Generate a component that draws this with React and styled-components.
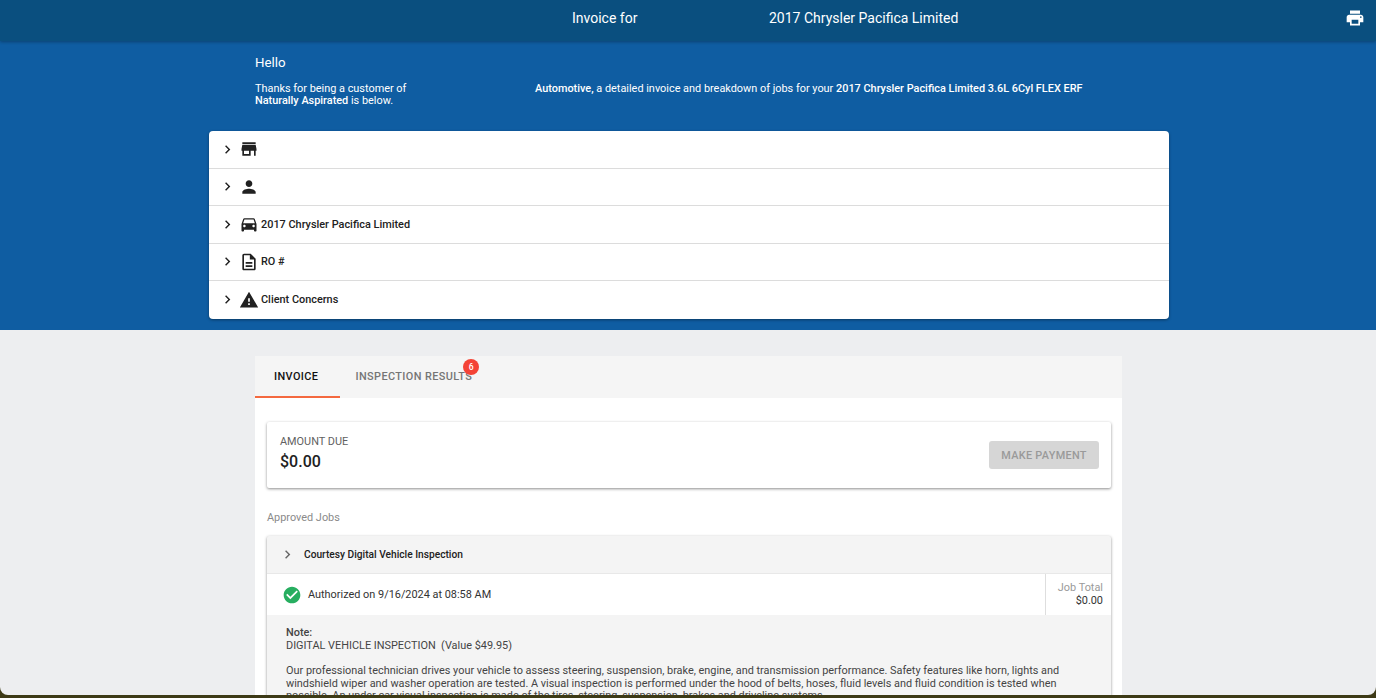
import styled, { createGlobalStyle } from 'styled-components';
import {
  MdStore,
  MdPerson,
  MdDirectionsCar,
  MdOutlineDescription,
  MdWarning,
  MdChevronRight,
  MdPrint,
  MdCheckCircle,
} from 'react-icons/md';

const GlobalStyle = createGlobalStyle`
  html, body {
    margin: 0;
    padding: 0;
    height: 100%;
    overflow: hidden;
    background: #3d3a16;
  }
  * {
    box-sizing: border-box;
  }
  body {
    font-family: Roboto, "Liberation Sans", sans-serif;
  }
`;

const rows = [
  { icon: <MdStore />, label: '' },
  { icon: <MdPerson />, label: '' },
  { icon: <MdDirectionsCar />, label: '2017 Chrysler Pacifica Limited' },
  { icon: <MdOutlineDescription />, label: 'RO #' },
  { icon: <MdWarning />, label: 'Client Concerns' },
];

export default function App() {
  return (
    <Desktop>
      <GlobalStyle />
      <Page>
        <TopBar>
          <TitleLeft>Invoice for</TitleLeft>
          <TitleRight>2017 Chrysler Pacifica Limited</TitleRight>
          <PrintButton>
            <MdPrint />
          </PrintButton>
        </TopBar>

        <Hero>
          <Greeting>
            <Hello>Hello</Hello>
            <Intro>
              <IntroLeft>
                Thanks for being a customer of
                <br />
                <b>Naturally Aspirated</b> is below.
              </IntroLeft>
              <IntroRight>
                <b>Automotive,</b> a detailed invoice and breakdown of jobs for your{' '}
                <b>2017 Chrysler Pacifica Limited 3.6L 6Cyl FLEX ERF</b>
              </IntroRight>
            </Intro>
          </Greeting>
          <Accordion>
            {rows.map((row, i) => (
              <AccordionRow key={i}>
                <RowChevron>
                  <MdChevronRight />
                </RowChevron>
                <RowIcon>{row.icon}</RowIcon>
                {row.label && <RowLabel>{row.label}</RowLabel>}
              </AccordionRow>
            ))}
          </Accordion>
        </Hero>

        <Main>
          <Card>
            <Tabs>
              <Tab $active>INVOICE</Tab>
              <Tab>
                INSPECTION RESULTS
                <Badge>6</Badge>
              </Tab>
            </Tabs>
            <CardBody>
              <AmountCard>
                <AmountText>
                  <AmountLabel>AMOUNT DUE</AmountLabel>
                  <AmountValue>$0.00</AmountValue>
                </AmountText>
                <PayButton>MAKE PAYMENT</PayButton>
              </AmountCard>

              <SectionTitle>Approved Jobs</SectionTitle>

              <JobCard>
                <JobHeader>
                  <JobChevron>
                    <MdChevronRight />
                  </JobChevron>
                  <JobName>Courtesy Digital Vehicle Inspection</JobName>
                </JobHeader>
                <JobStatus>
                  <Authorized>
                    <CheckIcon>
                      <MdCheckCircle />
                    </CheckIcon>
                    Authorized on 9/16/2024 at 08:58 AM
                  </Authorized>
                  <JobTotal>
                    <JobTotalLabel>Job Total</JobTotalLabel>
                    <JobTotalValue>$0.00</JobTotalValue>
                  </JobTotal>
                </JobStatus>
                <JobNote>
                  <NoteTitle>Note:</NoteTitle>
                  <div>DIGITAL VEHICLE INSPECTION&nbsp; (Value $49.95)</div>
                  <NoteText>
                    Our professional technician drives your vehicle to assess steering, suspension, brake, engine, and
                    transmission performance. Safety features like horn, lights and windshield wiper and washer operation
                    are tested. A visual inspection is performed under the hood of belts, hoses, fluid levels and fluid
                    condition is tested when possible. An under car visual inspection is made of the tires, steering,
                    suspension, brakes and driveline systems.
                  </NoteText>
                </JobNote>
              </JobCard>
            </CardBody>
          </Card>
        </Main>
      </Page>
    </Desktop>
  );
}

const Desktop = styled.div`
  height: 698px;
  padding-bottom: 3px;
  overflow: hidden;
  background: #3d3a16;
`;

const Page = styled.div`
  height: 695px;
  overflow: hidden;
  display: flex;
  flex-direction: column;
  background: #edeef0;
  border-radius: 0 0 8px 8px;
`;

const TopBar = styled.header`
  position: relative;
  z-index: 1;
  flex: none;
  height: 41px;
  display: flex;
  align-items: center;
  padding: 0 11px 6px 572px;
  background: #0a4f7f;
  color: #fff;
  font-size: 14px;
  box-shadow: 0 1px 3px rgba(0, 0, 0, 0.3);
`;

const TitleLeft = styled.div`
  width: 197px;
`;

const TitleRight = styled.div``;

const PrintButton = styled.div`
  margin-left: auto;
  display: flex;
  font-size: 20px;
`;

const Hero = styled.section`
  flex: none;
  height: 289px;
  background: #0f5da2;
  color: #fff;
  padding-top: 14px;
`;

const Greeting = styled.div`
  padding-left: 255px;
`;

const Hello = styled.div`
  font-size: 13.3px;
  line-height: 16px;
`;

const Intro = styled.div`
  display: flex;
  margin-top: 11.5px;
  font-size: 10.9px;
  line-height: 12.5px;

  b {
    font-weight: 500;
  }
`;

const IntroLeft = styled.div`
  width: 280px;
`;

const IntroRight = styled.div``;

const Accordion = styled.div`
  width: 960px;
  margin: 23.5px 0 0 209px;
  background: #fff;
  border-radius: 4px;
  overflow: hidden;
  color: #212121;
  box-shadow: 0 1px 3px rgba(0, 0, 0, 0.4);
`;

const AccordionRow = styled.div`
  height: 37.5px;
  display: flex;
  align-items: center;
  padding-left: 10px;
  border-bottom: 1px solid #dcdcdc;

  &:last-child {
    border-bottom: 0;
  }
`;

const RowChevron = styled.span`
  width: 19px;
  display: flex;
  font-size: 17px;
`;

const RowIcon = styled.span`
  width: 21px;
  display: flex;
  justify-content: center;
  font-size: 20px;
`;

const RowLabel = styled.span`
  margin-left: 2px;
  font-size: 10.9px;
  font-weight: 500;
`;

const Main = styled.main`
  flex: 1;
  min-height: 0;
  padding: 26px 254px 0 255px;
`;

const Card = styled.div`
  background: #fff;
  height: 100%;
`;

const Tabs = styled.div`
  height: 42px;
  display: flex;
  background: #f5f5f5;
`;

const Tab = styled.div`
  position: relative;
  height: 42px;
  padding: 0 22px 0 19px;
  display: flex;
  align-items: center;
  font-size: 10.9px;
  font-weight: 500;
  letter-spacing: 0.4px;
  color: ${(props) => (props.$active ? '#111' : '#757575')};
  border-bottom: 2px solid ${(props) => (props.$active ? '#f4693f' : 'transparent')};

  & + & {
    margin-left: -4px;
  }
`;

const Badge = styled.span`
  position: absolute;
  top: 3px;
  right: 15px;
  width: 16px;
  height: 16px;
  border-radius: 50%;
  display: flex;
  align-items: center;
  justify-content: center;
  background: #f44336;
  color: #fff;
  font-size: 8.5px;
  letter-spacing: 0;
`;

const CardBody = styled.div`
  padding: 24px 11px 0 12px;
`;

const AmountCard = styled.div`
  height: 66px;
  display: flex;
  align-items: center;
  justify-content: space-between;
  padding: 0 12px 0 13px;
  border-radius: 2px;
  background: #fff;
  box-shadow: 0 1px 3px rgba(0, 0, 0, 0.45);
`;

const AmountText = styled.div`
  align-self: flex-start;
  padding-top: 13px;
`;

const AmountLabel = styled.div`
  font-size: 10.9px;
  line-height: 14px;
  color: #616161;
`;

const AmountValue = styled.div`
  margin-top: 3px;
  font-size: 16px;
  line-height: 20px;
  font-weight: 500;
  color: #212121;
`;

const PayButton = styled.div`
  width: 110px;
  height: 28px;
  display: flex;
  align-items: center;
  justify-content: center;
  border-radius: 3px;
  background: #d6d6d6;
  color: #9a9a9a;
  font-size: 10.9px;
  font-weight: 500;
  letter-spacing: 0.3px;
`;

const SectionTitle = styled.div`
  margin-top: 23px;
  font-size: 10.9px;
  line-height: 14px;
  color: #8a8a8a;
`;

const JobCard = styled.div`
  margin-top: 11px;
  border-radius: 2px;
  background: #f4f4f4;
  box-shadow: 0 1px 3px rgba(0, 0, 0, 0.45);
`;

const JobHeader = styled.div`
  height: 38px;
  display: flex;
  align-items: center;
  padding-left: 12px;
  border-bottom: 1px solid #e8e8e8;
`;

const JobChevron = styled.span`
  width: 25px;
  display: flex;
  font-size: 17px;
  color: #666;
`;

const JobName = styled.span`
  font-size: 10.2px;
  font-weight: 500;
  color: #212121;
`;

const JobStatus = styled.div`
  height: 41px;
  display: flex;
  background: #fff;
`;

const Authorized = styled.div`
  flex: 1;
  display: flex;
  align-items: center;
  padding-left: 15px;
  font-size: 10.9px;
  color: #333;
`;

const CheckIcon = styled.span`
  width: 26px;
  display: flex;
  font-size: 20px;
  color: #27ae60;
`;

const JobTotal = styled.div`
  width: 66px;
  padding: 8px 8px 0 0;
  text-align: right;
  border-left: 1px solid #dedede;
  font-size: 10.9px;
  line-height: 12.5px;
`;

const JobTotalLabel = styled.div`
  color: #9a9a9a;
`;

const JobTotalValue = styled.div`
  color: #333;
`;

const JobNote = styled.div`
  padding: 12px 50px 0 19px;
  font-size: 10.9px;
  line-height: 12.5px;
  color: #444;
`;

const NoteTitle = styled.div`
  font-weight: 500;
`;

const NoteText = styled.p`
  margin: 13px 0 0;
`;
